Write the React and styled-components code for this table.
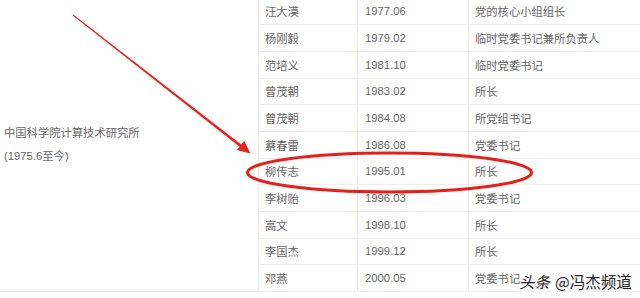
import React from "react";
import styled, { createGlobalStyle } from "styled-components";

const Global = createGlobalStyle`
  html, body { margin: 0; padding: 0; background: #fff; }
  body { width: 640px; height: 298px; overflow: hidden; }
`;

const Page = styled.div`
  position: relative;
  width: 640px;
  height: 298px;
  overflow: hidden;
  background: #fff;
  font-family: "Liberation Sans", "Noto Sans CJK SC", sans-serif;
  font-size: 11.3px;
  color: #666;
`;

const Table = styled.div`
  display: grid;
  grid-template-columns: 258px 99px 111px 1fr;
  grid-auto-rows: 26.67px;
  margin-top: -1.4px;
`;

const OrgCell = styled.div`
  grid-row: 1 / span 11;
  grid-column: 1;
  display: flex;
  flex-direction: column;
  justify-content: center;
  padding-left: 4px;
  line-height: 23px;
  border-bottom: 1px solid #e6e6e6;
`;

const Cell = styled.div`
  display: flex;
  align-items: center;
  padding-left: ${(p) => p.$pad || 6}px;
  border-left: 1px solid #ebebeb;
  border-bottom: 1px solid #eeeeee;
  white-space: nowrap;
`;

const Overlay = styled.svg`
  position: absolute;
  left: 0;
  top: 0;
  pointer-events: none;
`;

const Watermark = styled.div`
  position: absolute;
  left: 519px;
  top: 270px;
  font-family: "Noto Sans CJK SC", sans-serif;
  font-size: 15.5px;
  color: #262626;
  text-shadow: 0 0 2px #fff, 0 0 2px #fff, 1px 1px 1px rgba(0,0,0,0.15);
  white-space: nowrap;
`;

const Logo = styled.span`
  font-style: italic;
  margin-right: 5px;
`;

const rows = [
  ["汪大漠", "1977.06", "党的核心小组组长"],
  ["杨刚毅", "1979.02", "临时党委书记兼所负责人"],
  ["范培义", "1981.10", "临时党委书记"],
  ["曾茂朝", "1983.02", "所长"],
  ["曾茂朝", "1984.08", "所党组书记"],
  ["蔡春雷", "1986.08", "党委书记"],
  ["柳传志", "1995.01", "所长"],
  ["李树贻", "1996.03", "党委书记"],
  ["高文", "1998.10", "所长"],
  ["李国杰", "1999.12", "所长"],
  ["邓燕", "2000.05", "党委书记"],
];

export default function App() {
  return (
    <Page>
      <Global />
      <Table>
        <OrgCell>
          <div>中国科学院计算技术研究所</div>
          <div>(1975.6至今)</div>
        </OrgCell>
        {rows.map(([n, d, r], i) => (
          <React.Fragment key={i}>
            <Cell>{n}</Cell>
            <Cell $pad={7}>{d}</Cell>
            <Cell>{r}</Cell>
          </React.Fragment>
        ))}
      </Table>
      <Overlay width="640" height="298" viewBox="0 0 640 298">
        <polygon
          points="72.7,15.4 73.3,14.6 241.2,144.4 244.2,140.9 250.5,153.4 236.6,150.1 239.6,146.8"
          fill="#e8231b"
        />
        <ellipse cx="389.5" cy="172.5" rx="142" ry="19.5" fill="none" stroke="#e4201a" strokeWidth="3" />
      </Overlay>
      <Watermark>
        <Logo>头条</Logo>@冯杰频道
      </Watermark>
    </Page>
  );
}
